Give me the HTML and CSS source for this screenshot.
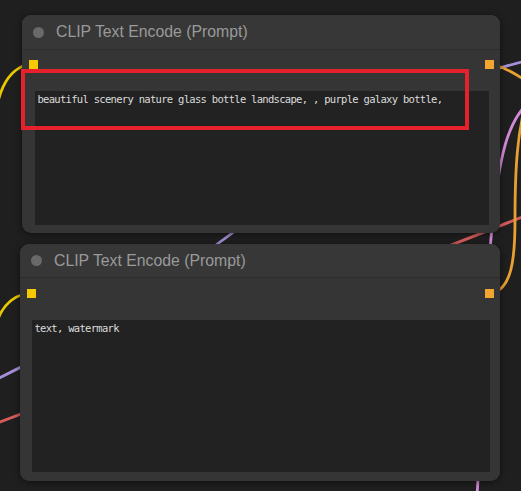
FILE: index.html
```html
<!DOCTYPE html>
<html lang="en">
<head>
<meta charset="utf-8">
<title>CLIP Text Encode</title>
<link rel="stylesheet" href="styles.css">
</head>
<body>
<div class="canvas">
  <svg class="wires" width="521" height="491" viewBox="0 0 521 491" aria-hidden="true">
    <path d="M -5,380 C 100,330 180,272 250,220" stroke="#a48fd8" />
    <path d="M -5,424 C 150,365 350,285 535,212" stroke="#d65c5c" />
    <path d="M -3,106 Q 4,72 26,65" stroke="#e8c800" />
    <path d="M -3,322 Q 4,300 24,294" stroke="#e8c800" />
    <path d="M 538,96 C 507,112 498,160 491,238 C 486,300 482,420 477,496" stroke="#d48ad8" />
    <path d="M 494,70 C 506,66 516,63 530,60" stroke="#a48fd8" />
    <path d="M 494,65 C 506,68 516,74 532,85" stroke="#e8a030" />
    <path d="M 528,96 C 517,130 515,170 515,220 C 515,262 511,286 494,293" stroke="#e8a030" />
  </svg>

  <div class="node node-a">
    <div class="node-title">
      <span class="dot"></span>
      <span class="title-text">CLIP Text Encode (Prompt)</span>
    </div>
    <div class="node-body">
      <div class="slots"><span class="slot slot-in"></span><span class="slot slot-out"></span></div>
      <div class="prompt">beautiful scenery nature glass bottle landscape, , purple galaxy bottle,</div>
    </div>
  </div>

  <div class="node node-b">
    <div class="node-title">
      <span class="dot"></span>
      <span class="title-text">CLIP Text Encode (Prompt)</span>
    </div>
    <div class="node-body">
      <div class="slots"><span class="slot slot-in"></span><span class="slot slot-out"></span></div>
      <div class="prompt">text, watermark</div>
    </div>
  </div>

  <div class="highlight"></div>
</div>
</body>
</html>
```

FILE: styles.css
```css
* { box-sizing: border-box; }

html, body {
  margin: 0;
  padding: 0;
  background: #1f1f1f;
  overflow: hidden;
}

.canvas {
  position: relative;
  width: 521px;
  height: 491px;
  background: #1f1f1f;
  font-family: "Liberation Sans", Arial, sans-serif;
}

.wires {
  position: absolute;
  left: 0;
  top: 0;
}

.wires path {
  fill: none;
  stroke-width: 2.8;
  stroke-linecap: round;
}

.node {
  position: absolute;
  display: flex;
  flex-direction: column;
  background: #353535;
  border-radius: 9px;
  box-shadow: 0 1px 6px rgba(0, 0, 0, 0.55);
  overflow: hidden;
}

.node-a { left: 22px; top: 15px; width: 478px; height: 218px; }
.node-b { left: 20px; top: 244px; width: 480px; height: 237px; }

.node-title {
  display: flex;
  align-items: center;
  gap: 12px;
  padding-left: 11px;
  background: #373737;
  border-bottom: 1px solid #2d2d2d;
}

.node-a .node-title { height: 35px; }
.node-b .node-title { height: 34px; }

.dot {
  width: 11px;
  height: 11px;
  border-radius: 50%;
  background: #696969;
  flex: none;
}

.title-text {
  color: #9a9a9a;
  font-size: 15.8px;
  white-space: nowrap;
}

.node-body {
  flex: 1;
  display: flex;
  flex-direction: column;
}

.node-a .node-body { padding: 10px 11px 8px 13px; }
.node-b .node-body { padding: 11px 10px 9px 12px; }

.slots {
  display: flex;
  justify-content: space-between;
  height: 9px;
  margin-bottom: 22px;
}

.node-a .slots { margin-left: -6px; margin-right: -5px; }
.node-b .slots { margin-left: -5px; margin-right: -4px; }

.slot {
  width: 9px;
  height: 9px;
  display: block;
}

.slot-in { background: #f5c800; }
.slot-out { background: #f2a62f; }

.prompt {
  flex: 1;
  background: #222222;
  color: #dcdcdc;
  font-family: "DejaVu Sans Mono", "Liberation Mono", monospace;
  font-size: 10.5px;
  letter-spacing: -0.7px;
  line-height: 13px;
  padding: 2px 2px 2px 2.5px;
  white-space: pre-wrap;
}

.highlight {
  position: absolute;
  left: 21px;
  top: 69px;
  width: 448px;
  height: 61px;
  border: 4.5px solid #e5212b;
}
```
